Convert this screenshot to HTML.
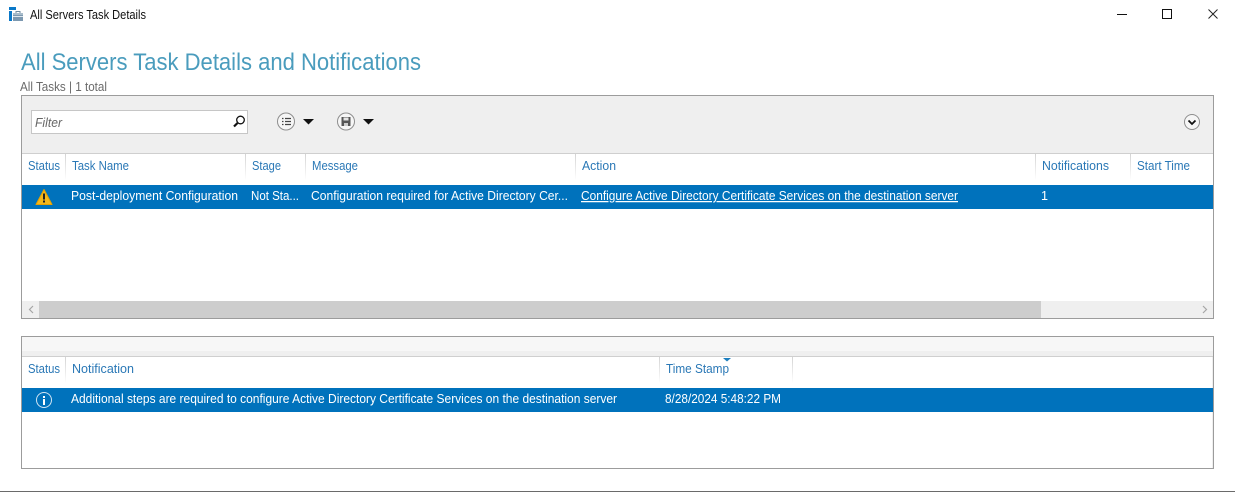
<!DOCTYPE html>
<html><head><meta charset="utf-8"><title>All Servers Task Details</title>
<style>
html,body{margin:0;padding:0;background:#fff;width:1235px;height:492px;overflow:hidden}
svg{display:block}
text{font-family:"Liberation Sans",sans-serif;font-size:12.5px}
.h{fill:#2a78b6}
.r{fill:#fff}
</style></head><body>
<svg width="1235" height="492" viewBox="0 0 1235 492" xmlns="http://www.w3.org/2000/svg">
<defs><linearGradient id="sep" x1="0" y1="0" x2="0" y2="1"><stop offset="0" stop-color="#d4d4d4"/><stop offset="0.6" stop-color="#ececec"/><stop offset="1" stop-color="#fff"/></linearGradient></defs>
<rect width="1235" height="492" fill="#fff"/>
<!-- title bar -->
<rect x="9" y="7" width="7" height="3" fill="#0a78c8"/>
<rect x="9" y="11" width="3" height="10" fill="#0a78c8"/>
<rect x="13" y="14" width="10" height="7" fill="#7c98b0"/>
<rect x="13" y="13" width="10" height="2" fill="#a8bccb"/>
<path d="M16 13v-1.500h4V13" fill="none" stroke="#6f8a9f"/>
<rect x="13" y="16" width="10" height="1" fill="#dfe7ed"/>
<text x="30" y="19" textLength="116" lengthAdjust="spacingAndGlyphs" fill="#111">All Servers Task Details</text>
<path d="M1117 14.500h10" stroke="#111" fill="none"/>
<rect x="1162.500" y="9.500" width="9" height="9" fill="none" stroke="#111"/>
<path d="M1208.500 9.500l9 9M1217.500 9.500l-9 9" stroke="#222" fill="none" stroke-width="1"/>
<text x="21" y="70" textLength="400" lengthAdjust="spacingAndGlyphs" style="font-size:24px" fill="#4a9cbd">All Servers Task Details and Notifications</text>
<text x="20" y="91" textLength="87" lengthAdjust="spacingAndGlyphs" fill="#6b6b6b">All Tasks | 1 total</text>
<!-- panel 1 -->
<rect x="21.500" y="95.500" width="1192" height="223" fill="#fff" stroke="#9c9c9c"/>
<rect x="22" y="96" width="1191" height="57" fill="#efefef"/>
<rect x="22" y="153" width="1191" height="1" fill="#cfcfcf"/>
<rect x="31.500" y="110.500" width="216" height="23" fill="#fff" stroke="#c6c6c6"/>
<text x="35" y="127" textLength="27" lengthAdjust="spacingAndGlyphs" font-style="italic" fill="#666">Filter</text>
<circle cx="240.500" cy="120" r="3.800" fill="none" stroke="#111" stroke-width="1.300"/>
<path d="M237.500 123l-3.500 3.500" stroke="#111" stroke-width="2.200" fill="none"/>
<circle cx="286" cy="121.500" r="8.500" fill="#f6f6f6" stroke="#8e8e8e"/>
<path d="M282 118.500h1.500M282 121.500h1.500M282 124.500h1.500M285 118.500h6M285 121.500h6M285 124.500h6" stroke="#444" stroke-width="1.300" fill="none"/>
<path d="M303 119h11l-5.500 5.500z" fill="#111"/>
<circle cx="346" cy="121.500" r="8.500" fill="#f6f6f6" stroke="#8e8e8e"/>
<path d="M341.500 117h9v9h-9z" fill="#555"/>
<rect x="343.500" y="117.500" width="5" height="3" fill="#e4e4e4"/>
<rect x="344" y="123" width="4" height="3" fill="#ccc"/>
<path d="M363 119h11l-5.500 5.500z" fill="#111"/>
<circle cx="1192" cy="122" r="7.500" fill="#f6f6f6" stroke="#8e8e8e"/>
<path d="M1188.500 120.500l3.500 3.500 3.500-3.500" fill="none" stroke="#111" stroke-width="1.800"/>
<g fill="url(#sep)">
<rect x="65" y="154" width="1" height="26"/><rect x="245" y="154" width="1" height="26"/><rect x="305" y="154" width="1" height="26"/><rect x="575" y="154" width="1" height="26"/><rect x="1035" y="154" width="1" height="26"/><rect x="1130" y="154" width="1" height="26"/>
</g>
<g class="h">
<text x="28" y="170" textLength="32" lengthAdjust="spacingAndGlyphs">Status</text>
<text x="72" y="170" textLength="57" lengthAdjust="spacingAndGlyphs">Task Name</text>
<text x="252" y="170" textLength="29" lengthAdjust="spacingAndGlyphs">Stage</text>
<text x="312" y="170" textLength="46" lengthAdjust="spacingAndGlyphs">Message</text>
<text x="582" y="170" textLength="34" lengthAdjust="spacingAndGlyphs">Action</text>
<text x="1042" y="170" textLength="67" lengthAdjust="spacingAndGlyphs">Notifications</text>
<text x="1137" y="170" textLength="53" lengthAdjust="spacingAndGlyphs">Start Time</text>
</g>
<rect x="22" y="185" width="1191" height="24" fill="#0072bc"/>
<path d="M44 189.500l8 15h-16z" fill="#f5b81c" stroke="#e6a200" stroke-width="1" stroke-linejoin="round"/>
<path d="M44 193.500v6" stroke="#222" stroke-width="2" fill="none"/>
<rect x="43" y="200.500" width="2" height="2" fill="#222"/>
<g class="r">
<text x="71" y="200" textLength="167" lengthAdjust="spacingAndGlyphs">Post-deployment Configuration</text>
<text x="251" y="200" textLength="48" lengthAdjust="spacingAndGlyphs">Not Sta...</text>
<text x="311" y="200" textLength="257" lengthAdjust="spacingAndGlyphs">Configuration required for Active Directory Cer...</text>
<text x="581" y="200" textLength="377" lengthAdjust="spacingAndGlyphs" text-decoration="underline">Configure Active Directory Certificate Services on the destination server</text>
<text x="1041" y="200" textLength="7" lengthAdjust="spacingAndGlyphs">1</text>
</g>
<!-- scrollbar -->
<rect x="22" y="301" width="1191" height="17" fill="#efefef"/>
<rect x="39" y="301" width="1002" height="17" fill="#cdcdcd"/>
<path d="M33 306l-3.500 3.500 3.500 3.500" fill="none" stroke="#a6a6a6" stroke-width="1.200"/>
<path d="M1203 306l3.500 3.500-3.500 3.500" fill="none" stroke="#a6a6a6" stroke-width="1.200"/>
<!-- panel 2 -->
<rect x="21.500" y="336.500" width="1192" height="132" fill="#fff" stroke="#9c9c9c"/>
<rect x="22" y="337" width="1191" height="15" fill="#f7f7f7"/>
<rect x="22" y="351" width="1191" height="5" fill="#efefef"/>
<rect x="22" y="356" width="1191" height="1" fill="#cfcfcf"/>
<rect x="1212" y="357" width="1" height="111" fill="#efefef"/>
<g fill="url(#sep)">
<rect x="65" y="357" width="1" height="26"/><rect x="659" y="357" width="1" height="26"/><rect x="792" y="357" width="1" height="26"/>
</g>
<path d="M723 358h8l-4 3.500z" fill="#1c7fc0"/>
<g class="h">
<text x="28" y="373" textLength="32" lengthAdjust="spacingAndGlyphs">Status</text>
<text x="72" y="373" textLength="62" lengthAdjust="spacingAndGlyphs">Notification</text>
<text x="666" y="373" textLength="63" lengthAdjust="spacingAndGlyphs">Time Stamp</text>
</g>
<rect x="22" y="388" width="1191" height="24" fill="#0072bc"/>
<circle cx="44" cy="400" r="7.500" fill="none" stroke="#cfe4f3" stroke-width="1"/>
<rect x="43" y="396" width="2" height="2" fill="#fff"/>
<rect x="43" y="399" width="2" height="6" fill="#fff"/>
<g class="r">
<text x="71" y="403" textLength="546" lengthAdjust="spacingAndGlyphs">Additional steps are required to configure Active Directory Certificate Services on the destination server</text>
<text x="665" y="403" textLength="116" lengthAdjust="spacingAndGlyphs">8/28/2024 5:48:22 PM</text>
</g>
<rect x="0" y="491" width="1235" height="1" fill="#6a6a6a"/>
</svg>
</body></html>
